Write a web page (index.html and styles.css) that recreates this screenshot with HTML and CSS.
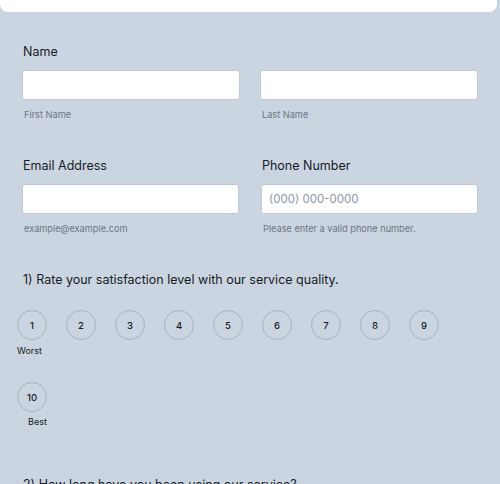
FILE: index.html
```html
<!DOCTYPE html>
<html lang="en">
<head>
    <meta charset="UTF-8">
    <meta name="viewport" content="width=device-width, initial-scale=1.0">
    <title>Customer Survey</title>
    <link rel="stylesheet" href="styles.css">
</head>
<body>

    <div class="header-card"></div>

    <form class="survey-form" id="surveyForm">
        <div class="form-row">
            <label class="field-label">Name</label>
            <div class="field-pair">
                <div class="field">
                    <input type="text" name="first_name">
                    <span class="sublabel">First Name</span>
                </div>
                <div class="field">
                    <input type="text" name="last_name">
                    <span class="sublabel">Last Name</span>
                </div>
            </div>
        </div>

        <div class="form-row">
            <div class="field-pair">
                <div class="field">
                    <label class="field-label">Email Address</label>
                    <input type="email" name="email">
                    <span class="sublabel">example@example.com</span>
                </div>
                <div class="field field-phone">
                    <label class="field-label">Phone Number</label>
                    <input type="tel" name="phone" placeholder="(000) 000-0000">
                    <span class="sublabel">Please enter a valid phone number.</span>
                </div>
            </div>
        </div>

        <div class="form-row question">
            <label class="field-label">1) Rate your satisfaction level with our service quality.</label>
            <div class="rating">
                <div class="rating-item"><span class="circle">1</span><span class="rating-label">Worst</span></div>
                <div class="rating-item"><span class="circle">2</span></div>
                <div class="rating-item"><span class="circle">3</span></div>
                <div class="rating-item"><span class="circle">4</span></div>
                <div class="rating-item"><span class="circle">5</span></div>
                <div class="rating-item"><span class="circle">6</span></div>
                <div class="rating-item"><span class="circle">7</span></div>
                <div class="rating-item"><span class="circle">8</span></div>
                <div class="rating-item"><span class="circle">9</span></div>
                <div class="rating-item"><span class="circle">10</span><span class="rating-label best">Best</span></div>
            </div>
        </div>

        <div class="form-row question">
            <label class="field-label">2) How long have you been using our service?</label>
        </div>
    </form>

</body>
</html>
```

FILE: styles.css
```css
body {
    font-family: Inter, "Noto Sans", sans-serif;
    background-color: #cbd5e1;
    margin: 0;
    color: #161b26;
}
.header-card {
    width: 497px;
    height: 12px;
    background: white;
    border-radius: 0 0 8px 8px;
}
.survey-form {
    padding: 30px 22px 0 22px;
}
.form-row {
    margin-bottom: 35px;
}
.field-label {
    display: block;
    font-size: 12.5px;
    line-height: 20px;
    margin: 0 0 8px 1px;
}
.field-pair {
    display: flex;
    gap: 20px;
}
.field {
    flex: 1;
    display: flex;
    flex-direction: column;
}
.field-phone {
    margin-left: 2px;
}
.field input {
    height: 30px;
    box-sizing: border-box;
    border: 1px solid #c3c9d3;
    border-radius: 3px;
    background: white;
    padding: 0 7px;
    font-family: inherit;
    font-size: 11.5px;
}
.field input::placeholder {
    color: #8e97a8;
}
.sublabel {
    margin: 9px 0 0 2px;
    font-size: 9.2px;
    line-height: 12px;
    color: #6b7482;
}

/* шкала оценки */
.question .field-label {
    margin-bottom: 20px;
}
.rating {
    display: flex;
    flex-wrap: wrap;
    column-gap: 19px;
    row-gap: 25px;
    margin-left: -5px;
    width: 461px;
}
.rating-item {
    display: flex;
    flex-direction: column;
    width: 30px;
}
.circle {
    width: 30px;
    height: 30px;
    box-sizing: border-box;
    border: 1px solid #a9b1bd;
    border-radius: 50%;
    display: flex;
    align-items: center;
    justify-content: center;
    font-size: 9.5px;
    font-weight: 500;
}
.rating-label {
    margin-top: 5px;
    font-size: 9px;
    line-height: 12px;
    white-space: nowrap;
}
.rating-label.best {
    margin-left: 11px;
    margin-top: 4px;
}
.rating-item:last-child {
    margin-bottom: 12px;
}
```
